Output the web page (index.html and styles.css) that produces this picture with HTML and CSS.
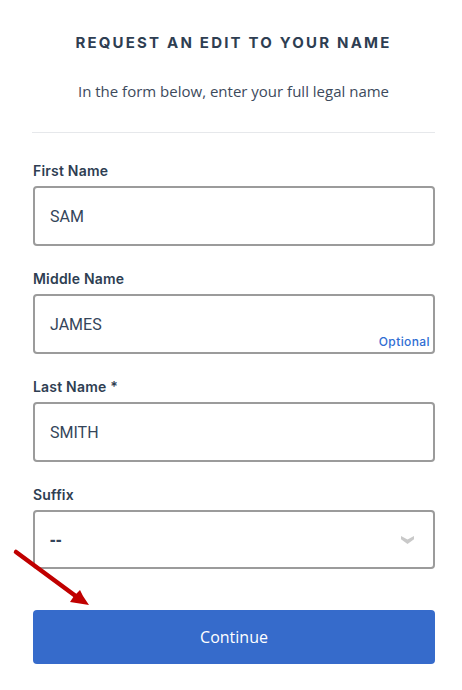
FILE: index.html
```html
<!DOCTYPE html>
<html lang="en">
<head>
<meta charset="utf-8">
<title>Request an edit to your name</title>
<link rel="stylesheet" href="styles.css">
</head>
<body>
<main class="page">
  <h1 class="title">REQUEST AN EDIT TO YOUR NAME</h1>
  <p class="subtitle">In the form below, enter your full legal name</p>
  <hr class="divider">
  <form class="form">
    <div class="field">
      <label class="label">First Name</label>
      <div class="box"><span class="value">SAM</span></div>
    </div>
    <div class="field">
      <label class="label">Middle Name</label>
      <div class="box"><span class="value">JAMES</span><span class="hint">Optional</span></div>
    </div>
    <div class="field">
      <label class="label">Last Name *</label>
      <div class="box"><span class="value">SMITH</span></div>
    </div>
    <div class="field">
      <label class="label">Suffix</label>
      <div class="box select"><span class="value dashes">--</span>
        <svg class="chevron" width="13" height="8" viewBox="0 0 13 8"><path d="M0 0 L6.5 3.6 L13 0 L13 3.2 L6.5 8 L0 3.2 Z" fill="#c9c9c9"/></svg>
      </div>
    </div>
    <button type="button" class="continue">Continue</button>
  </form>
  <svg class="arrow" width="100" height="75" viewBox="0 0 100 75">
    <line x1="16" y1="12" x2="77" y2="57" stroke="#c00000" stroke-width="4.5" stroke-linecap="round"/>
    <polygon points="89,65 70,62 74,56 80,50 83,56" fill="#c00000"/>
  </svg>
</main>
</body>
</html>
```
FILE: styles.css
```css
* { box-sizing: border-box; }
body { margin: 0; background: #fff; }
.page {
  position: relative;
  padding: 33px 27px 0 32px;
  font-family: "Open Sans", sans-serif;
}
.title {
  margin: 0;
  text-align: center;
  font-family: "Inter", sans-serif;
  font-weight: 700;
  font-size: 15px;
  line-height: 20px;
  letter-spacing: 2.2px;
  color: #2e3e52;
}
.subtitle {
  margin: 28px 0 0;
  text-align: center;
  font-size: 15px;
  line-height: 20px;
  color: #3d4a5c;
}
.divider {
  margin: 31px 0 0;
  border: 0;
  border-top: 1px solid #e6e8eb;
}
.form {
  display: flex;
  flex-direction: column;
  padding: 29px 0 0 1px;
}
.field {
  display: flex;
  flex-direction: column;
  gap: 6px;
  margin-bottom: 24px;
}
.label {
  font-family: "Inter", sans-serif;
  font-weight: 600;
  font-size: 14px;
  line-height: 18px;
  letter-spacing: 0.2px;
  color: #2e3e52;
}
.box {
  position: relative;
  display: flex;
  align-items: center;
  height: 60px;
  padding: 0 15px;
  border: 2px solid #9b9b9b;
  border-radius: 4px;
}
.select { height: 59px; }
.value {
  font-family: "Roboto", sans-serif;
  font-size: 16px;
  color: #34455a;
}
.dashes {
  font-family: "Open Sans", sans-serif;
  font-weight: 700;
  font-size: 17px;
  letter-spacing: 0.5px;
}
.hint {
  position: absolute;
  right: 3px;
  bottom: 3px;
  font-family: "Inter", sans-serif;
  font-weight: 500;
  font-size: 12px;
  line-height: 14px;
  letter-spacing: 0.4px;
  color: #2f6dd3;
}
.chevron {
  position: absolute;
  right: 19px;
  top: 24px;
}
.continue {
  margin-top: 17px;
  height: 54px;
  border: 0;
  border-radius: 4px;
  background: #366bcb;
  color: #fff;
  font-family: "Open Sans", sans-serif;
  font-weight: 500;
  font-size: 16px;
}
.arrow {
  position: absolute;
  left: 0;
  top: 540px;
}
```
